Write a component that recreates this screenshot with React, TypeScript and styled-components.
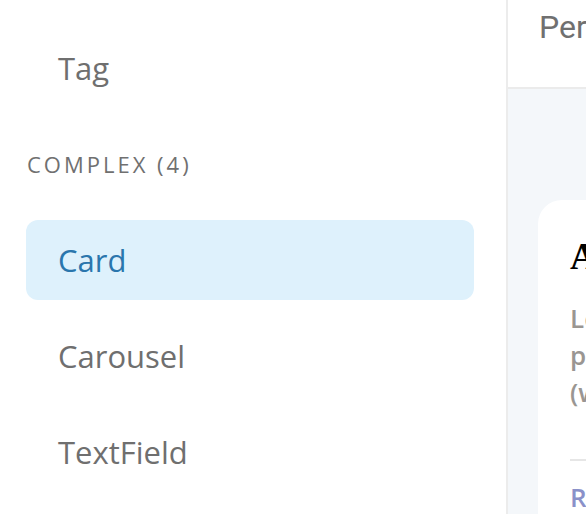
import React from "react";
import styled, { createGlobalStyle } from "styled-components";

const GlobalStyle = createGlobalStyle`
  html, body {
    margin: 0;
    padding: 0;
    background: #fff;
  }
  body {
    font-family: "Open Sans", "Noto Sans", sans-serif;
  }
`;

const Shell = styled.div`
  display: flex;
  align-items: flex-start;
  width: 586px;
  height: 514px;
  overflow: hidden;
`;

const Sidebar = styled.nav`
  flex: 0 0 auto;
  align-self: stretch;
  width: 448px;
  padding: 28px 32px 0 26px;
  border-right: 2px solid #ececec;
  display: flex;
  flex-direction: column;
`;

const GroupTitle = styled.h4`
  margin: 0;
  padding: 40px 0 40px 1px;
  font-size: 22px;
  line-height: 32px;
  font-weight: 400;
  letter-spacing: 3px;
  color: #707070;
  text-transform: uppercase;
`;

const NavList = styled.ul`
  list-style: none;
  margin: 0;
  padding: 0;
  display: flex;
  flex-direction: column;
  gap: 16px;
`;

const NavItem = styled.li<{ $active?: boolean }>`
  display: flex;
  align-items: center;
  height: 80px;
  padding-left: 32px;
  border-radius: 12px;
  font-size: 31px;
  color: ${(p) => (p.$active ? "#2a76ad" : "#6f6f6f")};
  background: ${(p) => (p.$active ? "#def1fc" : "transparent")};
`;

const Main = styled.main`
  flex: 0 0 auto;
  align-self: stretch;
  width: 640px;
  display: flex;
  flex-direction: column;
  background: #f4f7fa;
`;

const TopBar = styled.header`
  flex-shrink: 0;
  height: 89px;
  padding: 8px 31px 0;
  box-sizing: border-box;
  background: #fff;
  border-bottom: 2px solid #ebebeb;
  font-family: Roboto, "Liberation Sans", sans-serif;
  font-size: 32px;
  line-height: 38px;
  color: #707070;
`;

const Content = styled.section`
  flex-shrink: 0;
  padding: 111px 30px 0;
`;

const Card = styled.article`
  background: #fff;
  border-radius: 24px;
  padding: 36px 32px 32px;
`;

const CardTitle = styled.h3`
  margin: 0 0 22px;
  font-family: "Liberation Serif", serif;
  font-size: 37px;
  line-height: 42px;
  font-weight: 700;
  color: #000;
`;

const CardText = styled.p`
  margin: 0;
  font-size: 26px;
  line-height: 37px;
  font-weight: 600;
  color: #9a9692;
  white-space: nowrap;
`;

const Divider = styled.hr`
  margin: 48px 0 0;
  border: 0;
  border-top: 2px solid #e6e6e6;
`;

const CardLink = styled.a`
  display: block;
  margin-top: 18px;
  font-size: 26px;
  line-height: 37px;
  font-weight: 600;
  color: #8a91c9;
  text-decoration: none;
`;

const complexItems = ["Card", "Carousel", "TextField"];

export default function App() {
  return (
    <>
      <GlobalStyle />
      <Shell>
        <Sidebar>
          <NavList>
            <NavItem>Tag</NavItem>
          </NavList>
          <GroupTitle>Complex (4)</GroupTitle>
          <NavList>
            {complexItems.map((item) => (
              <NavItem key={item} $active={item === "Card"}>
                {item}
              </NavItem>
            ))}
          </NavList>
        </Sidebar>
        <Main>
          <TopBar>Personal components</TopBar>
          <Content>
            <Card>
              <CardTitle>A card title</CardTitle>
              <CardText>
                Lorem ipsum dolor sit amet, consectetur
                <br />
                pellentesque habitant morbi tristique
                <br />
                (with a little supporting text)
              </CardText>
              <Divider />
              <CardLink href="#">Read more</CardLink>
            </Card>
          </Content>
        </Main>
      </Shell>
    </>
  );
}
